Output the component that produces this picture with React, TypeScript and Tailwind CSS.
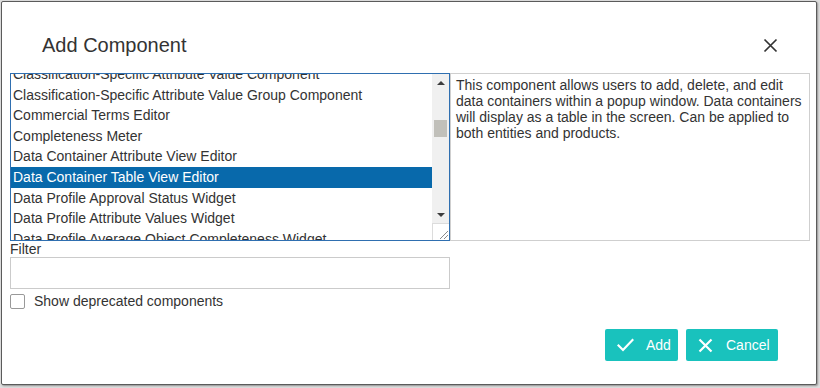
import React, { useState } from 'react';

const components = [
  'Classification-Specific Attribute Value Component',
  'Classification-Specific Attribute Value Group Component',
  'Commercial Terms Editor',
  'Completeness Meter',
  'Data Container Attribute View Editor',
  'Data Container Table View Editor',
  'Data Profile Approval Status Widget',
  'Data Profile Attribute Values Widget',
  'Data Profile Average Object Completeness Widget',
];

const CheckIcon = () => (
  <svg width="17" height="14" viewBox="0 0 17 14" fill="none">
    <path d="M1.5 7.5 L6 12 L15.5 2" stroke="white" strokeWidth="2.2" strokeLinecap="square" />
  </svg>
);

const CrossIcon = ({ size = 15, color = 'white', width = 2.2 }: { size?: number; color?: string; width?: number }) => (
  <svg width={size} height={size} viewBox="0 0 15 15" fill="none">
    <path d="M1.5 1.5 L13.5 13.5 M13.5 1.5 L1.5 13.5" stroke={color} strokeWidth={width} />
  </svg>
);

export default function App() {
  const [selected, setSelected] = useState(5);
  const [filter, setFilter] = useState('');
  const [showDeprecated, setShowDeprecated] = useState(false);

  return (
    <div
      className="w-[820px] h-[388px] bg-[#dedede] pt-[1px] pl-[1px] text-[#333]"
      style={{ fontFamily: '"Liberation Sans", Arial, sans-serif' }}
    >
      <div className="w-[816px] h-[384px] bg-white border border-[#5b5b5b] rounded-[2px] shadow-[1px_1px_2px_rgba(0,0,0,0.35)] flex flex-col">
        {/* header */}
        <div className="h-[71px] pt-[15px] pl-[40px] pr-[38px] flex items-center justify-between">
          <h1 className="text-[20px] leading-[24px] text-[#333]">Add Component</h1>
          <button className="w-[15px] h-[15px] flex items-center justify-center">
            <CrossIcon size={15} color="#333" width={1.7} />
          </button>
        </div>

        {/* list + description */}
        <div className="flex pl-[8px]">
          <div className="w-[440px] h-[168px] border border-[#2f6fb0] flex">
            <div className="flex-1 overflow-hidden">
              <div className="-mt-[10px]">
                {components.map((c, i) => (
                  <div
                    key={c}
                    onClick={() => setSelected(i)}
                    className={`h-[20.6px] leading-[20.6px] pl-[2px] text-[14px] whitespace-nowrap cursor-default ${
                      i === selected ? 'bg-[#0869ab] text-white' : 'text-[#333]'
                    }`}
                  >
                    {c}
                  </div>
                ))}
              </div>
            </div>
            {/* scrollbar */}
            <div className="w-[17px] bg-[#f0f0f0] flex flex-col">
              <div className="h-[17px] flex items-center justify-center">
                <div className="w-0 h-0 border-l-[4px] border-r-[4px] border-b-[4px] border-l-transparent border-r-transparent border-b-[#3c3c3c]" />
              </div>
              <div className="h-[29px]" />
              <div className="h-[17px] mx-[2px] bg-[#c1c0ba]" />
              <div className="flex-1" />
              <div className="h-[17px] flex items-center justify-center">
                <div className="w-0 h-0 border-l-[4px] border-r-[4px] border-t-[4px] border-l-transparent border-r-transparent border-t-[#3c3c3c]" />
              </div>
              <div className="h-[17px] bg-white border-t border-l border-[#dcdcdc] flex items-end justify-end">
                <svg width="12" height="12" viewBox="0 0 12 12">
                  <path d="M11 3 L3 11 M11 7 L7 11" stroke="#8a8a8a" strokeWidth="1" />
                </svg>
              </div>
            </div>
          </div>
          <div className="w-[360px] h-[168px] border border-[#cfcfcf] pt-[3px] pl-[5px] text-[14px] leading-[16px] text-[#333]">
            This component allows users to add, delete, and edit
            <br />
            data containers within a popup window. Data containers
            <br />
            will display as a table in the screen. Can be applied to
            <br />
            both entities and products.
          </div>
        </div>

        {/* filter */}
        <div className="pl-[8px]">
          <label className="block text-[14px] leading-[16px] text-[#333]">Filter</label>
          <input
            value={filter}
            onChange={(e) => setFilter(e.target.value)}
            className="w-[440px] h-[32px] border border-[#cbcbcb] px-2 text-[14px] outline-none"
          />
          <label className="mt-[4px] h-[16px] flex items-center gap-[9px] text-[14px] text-[#333] cursor-pointer">
            <span
              onClick={() => setShowDeprecated(!showDeprecated)}
              className="w-[15px] h-[15px] border border-[#999] rounded-[2px] bg-white flex items-center justify-center"
            >
              {showDeprecated && <span className="w-[7px] h-[7px] bg-[#333]" />}
            </span>
            Show deprecated components
          </label>
        </div>

        {/* footer */}
        <div className="mt-[20px] pr-[38px] flex justify-end gap-[8px]">
          <button className="h-[32px] w-[73px] pl-[12px] bg-[#19c2bd] rounded-[2px] text-white text-[14px] flex items-center gap-[12px]">
            <CheckIcon />
            Add
          </button>
          <button className="h-[32px] w-[92px] pl-[12px] bg-[#19c2bd] rounded-[2px] text-white text-[14px] flex items-center gap-[13px]">
            <CrossIcon />
            Cancel
          </button>
        </div>
      </div>
    </div>
  );
}
